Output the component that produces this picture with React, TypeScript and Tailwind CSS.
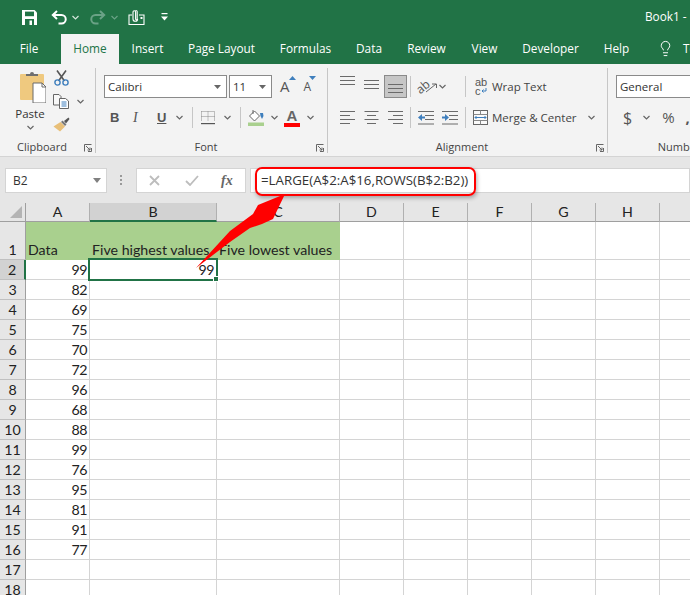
import * as React from "react";
import { Lightbulb } from "lucide-react";

/* ================= SMALL ICONS ================= */

function Chevron({ className = "" }: { className?: string }) {
  return (
    <svg width="7" height="5" viewBox="0 0 7 5" className={`shrink-0 ${className}`}>
      <path d="M0.5 1 L3.5 4 L6.5 1" fill="none" stroke="#666" strokeWidth="1.2" />
    </svg>
  );
}

function Launcher() {
  return (
    <svg width="8" height="8" viewBox="0 0 8 8" className="shrink-0">
      <path d="M0.5 7.5 V0.5 H7.5 M7.5 4 V7.5 H4 M2 2 L6 6 M6 3.5 V6 H3.5" fill="none" stroke="#666" strokeWidth="1" />
    </svg>
  );
}

function Lines({ widths, align = "left" }: { widths: number[]; align?: "left" | "center" | "right" }) {
  return (
    <svg width="15" height="13" viewBox="0 0 15 13" className="block shrink-0">
      {widths.map((w, i) => {
        const x = align === "left" ? 0 : align === "right" ? 15 - w : (15 - w) / 2;
        return <rect key={i} x={x} y={i * 4} width={w} height="1" fill="#6a6a6a" />;
      })}
    </svg>
  );
}

function Indent({ flip }: { flip?: boolean }) {
  return (
    <svg width="16" height="14" viewBox="0 0 16 14" className="block shrink-0">
      <path d="M0 0.5 H16 M7 4.5 H16 M7 8.5 H16 M0 13 H16" stroke="#6a6a6a" strokeWidth="1" />
      <path
        d={flip ? "M0 5.5 H3 V3 L7 6.5 L3 10 V7.5 H0 Z" : "M7 5.5 H4 V3 L0 6.5 L4 10 V7.5 H7 Z"}
        fill="#3f7fbd"
      />
    </svg>
  );
}

/* ================= TITLE + TABS ================= */

const tabs = [
  { label: "Insert", w: "w-[57px]" },
  { label: "Page Layout", w: "w-[91px]" },
  { label: "Formulas", w: "w-[77px]" },
  { label: "Data", w: "w-[50px]" },
  { label: "Review", w: "w-[65px]" },
  { label: "View", w: "w-[51px]" },
  { label: "Developer", w: "w-[81px]" },
  { label: "Help", w: "w-[51px]" },
];

function TitleBar() {
  return (
    <div className="flex h-[34px] items-center overflow-hidden pl-[22px] text-white whitespace-nowrap [&>svg]:shrink-0">
      <svg width="15" height="15" viewBox="0 0 15 15">
        <path d="M0 0 H12.5 L15 2.5 V15 H0 Z" fill="white" />
        <rect x="3" y="1.6" width="9" height="4.6" fill="#217346" />
        <rect x="3" y="9" width="9" height="6" fill="#217346" />
        <rect x="7.5" y="10.5" width="2.5" height="4.5" fill="white" />
      </svg>
      <svg width="17" height="15" viewBox="0 0 17 15" className="ml-[14px]">
        <path d="M6 1 L1.8 5 L6 9 M2 5 H10.5 A4 4 0 0 1 10.5 13.5 H7.5" fill="none" stroke="white" strokeWidth="2" />
      </svg>
      <Chevron className="ml-[4px] [&>path]:stroke-[#d5e6dc]" />
      <svg width="17" height="15" viewBox="0 0 17 15" className="ml-[10px]">
        <path d="M11 1 L15.2 5 L11 9 M15 5 H6.5 A4 4 0 0 0 6.5 13.5 H9.5" fill="none" stroke="#6aa286" strokeWidth="2" />
      </svg>
      <Chevron className="ml-[5px] [&>path]:stroke-[#6aa286]" />
      <svg width="17" height="17" viewBox="0 0 17 17" className="ml-[10px]">
        <path
          d="M4 6 H1 V15.5 H16 V6 H11 M5 10 V3 A1.3 1.3 0 0 1 7.6 3 V10 A0.8 0.8 0 0 0 9.2 10 V3 A1.3 1.3 0 0 0 7.6 1.5 M5 10 A2.2 2.2 0 0 0 9.6 10"
          fill="none"
          stroke="white"
          strokeWidth="1.1"
        />
        <rect x="12.5" y="8" width="2" height="2" fill="white" />
      </svg>
      <svg width="7" height="8" viewBox="0 0 7 8" className="ml-[16px]">
        <rect x="0.5" y="0" width="6" height="1.2" fill="white" />
        <path d="M0 3.5 H7 L3.5 7.5 Z" fill="white" />
      </svg>
      <span className="ml-[477px] text-[11.8px]">Book1 - Excel</span>
    </div>
  );
}

function TabBar() {
  return (
    <div className="flex h-[30px] items-stretch overflow-hidden pl-[7px] text-[11.8px] text-white whitespace-nowrap">
      <div className="flex w-[44px] shrink-0 items-center justify-center">File</div>
      <div className="ml-[10px] flex w-[58px] shrink-0 items-center justify-center bg-[#f3f3f3] text-[#217346]">Home</div>
      {tabs.map((t) => (
        <div key={t.label} className={`flex shrink-0 items-center justify-center ${t.w}`}>
          {t.label}
        </div>
      ))}
      <Lightbulb size={17} strokeWidth={1.4} className="ml-[15px] mt-[6px] shrink-0" />
      <span className="ml-[9px] flex shrink-0 items-center">Tell me</span>
    </div>
  );
}

/* ================= RIBBON ================= */

function Group({
  label,
  width,
  launcher = true,
  children,
}: {
  label: string;
  width: string;
  launcher?: boolean;
  children: React.ReactNode;
}) {
  return (
    <div className={`flex h-[85px] shrink-0 flex-col border-r border-[#c6c6c6] ${width}`}>
      <div className="h-[74px]">{children}</div>
      <div className="flex h-[11px] items-center pr-[3px] text-[11px] text-[#444]">
        <span className="flex-1 text-center">{label}</span>
        {launcher && <Launcher />}
      </div>
    </div>
  );
}

function ClipboardGroup() {
  return (
    <div className="flex h-full">
      <div className="ml-[14px] flex w-[32px] shrink-0 flex-col items-center">
        <svg width="29" height="32" viewBox="0 0 29 32" className="mt-[3px] ml-[2px] shrink-0">
          <rect x="3" y="3" width="24" height="26" rx="1" fill="#efc97f" />
          <path d="M10 5 V3 H14 A2 2 0 0 1 18 3 H22 V5 Z" fill="#6f6f6f" transform="translate(-1 0)" />
          <path d="M16 12 H25 L29 16 V32 H16 Z" fill="white" stroke="#6a6a6a" strokeWidth="1" />
          <path d="M25 12 V16 H29" fill="none" stroke="#6a6a6a" strokeWidth="1" />
        </svg>
        <span className="mt-[2px] text-[11.5px] leading-[17px] text-[#333]">Paste</span>
        <Chevron className="mt-[3px]" />
      </div>
      <div className="ml-[7px] flex flex-col">
        <svg width="15" height="16" viewBox="0 0 15 16" className="mt-[2px] ml-[1px] shrink-0">
          <path d="M3 0.5 L10.5 11 M12 0.5 L4.5 11" stroke="#555" strokeWidth="1.6" />
          <circle cx="3.5" cy="12.5" r="2.6" fill="none" stroke="#3f7fbd" strokeWidth="1.4" />
          <circle cx="11.5" cy="12.5" r="2.6" fill="none" stroke="#3f7fbd" strokeWidth="1.4" />
        </svg>
        <div className="mt-[8px] flex items-center">
          <svg width="16" height="15" viewBox="0 0 16 15" className="shrink-0">
            <path d="M0.5 0.5 H6 L8 2.5 V11 H0.5 Z" fill="#f8f8f8" stroke="#666" />
            <path d="M6.5 4.5 H12.5 L15.5 7 V14.5 H6.5 Z" fill="white" stroke="#666" />
            <path d="M8.5 8 H13.5 M8.5 10 H13.5 M8.5 12 H13.5" stroke="#3f7fbd" />
          </svg>
          <Chevron className="ml-[8px]" />
        </div>
        <svg width="17" height="15" viewBox="0 0 17 15" className="mt-[8px] shrink-0">
          <path d="M11 4 L15.5 0.5 L16.5 2 L13 6.5 Z" fill="#555" />
          <path d="M9.5 3.5 L13.5 7.5 L12 9 L8 5 Z" fill="#777" />
          <path d="M7.5 5 L12 9.5 L7 14.5 L0.5 9.5 Z" fill="#e8bf78" />
        </svg>
      </div>
    </div>
  );
}

function ComboBox({ text, width }: { text: string; width: string }) {
  return (
    <div className={`flex h-[23px] shrink-0 items-center border border-[#8a8a8a] bg-white pl-[3px] pr-[5px] ${width}`}>
      <span className="flex-1 text-[11.5px] text-[#333]">{text}</span>
      <svg width="7" height="4" viewBox="0 0 7 4">
        <path d="M0 0 H7 L3.5 4 Z" fill="#666" />
      </svg>
    </div>
  );
}

function Vr({ className = "" }: { className?: string }) {
  return <div className={`h-[21px] w-px shrink-0 bg-[#c6c6c6] ${className}`} />;
}

function FontGroup() {
  return (
    <div>
      <div className="ml-[8px] flex items-center pt-[7px]">
        <ComboBox text="Calibri" width="w-[123px]" />
        <ComboBox text="11" width="w-[43px] ml-[2px]" />
        <span className="relative ml-[8px] text-[15px] text-[#555]">
          A
          <svg width="7" height="4" viewBox="0 0 7 4" className="absolute -right-[6px] top-[1px]">
            <path d="M0 4 H7 L3.5 0 Z" fill="#3f7fbd" />
          </svg>
        </span>
        <span className="relative ml-[14px] text-[12px] text-[#555]">
          A
          <svg width="7" height="4" viewBox="0 0 7 4" className="absolute -right-[5px] -top-[2px]">
            <path d="M0 0 H7 L3.5 4 Z" fill="#3f7fbd" />
          </svg>
        </span>
      </div>
      <div className="mt-[9px] flex h-[21px] items-center text-[#555]">
        <span className="ml-[14px] w-[9px] font-['Liberation_Sans',sans-serif] text-[13px] font-bold">B</span>
        <span className="ml-[14px] w-[7px] font-['Liberation_Serif',serif] text-[14px] italic">I</span>
        <span className="ml-[17px] w-[9px] font-['Liberation_Sans',sans-serif] text-[13px] font-bold underline">U</span>
        <Chevron className="ml-[10px]" />
        <Vr className="ml-[9px]" />
        <svg width="14" height="14" viewBox="0 0 14 14" className="ml-[8px] shrink-0">
          <path d="M0.5 0.5 H13.5 V10 M0.5 0.5 V10 M7 0.5 V10 M0.5 5.5 H13.5" fill="none" stroke="#888" strokeDasharray="1 1" />
          <rect x="0" y="12" width="14" height="1.2" fill="#555" />
        </svg>
        <Chevron className="ml-[9px]" />
        <Vr className="ml-[9px]" />
        <svg width="16" height="16" viewBox="0 0 16 16" className="ml-[7px] shrink-0">
          <path d="M6.5 1 L11.5 6 L6.5 11 L1.5 6 Z" fill="white" stroke="#666" />
          <path d="M5 0 V4" stroke="#666" />
          <path d="M12 3 H15 L15.5 6 L14 9 L12.5 6 Z" fill="#3f7fbd" />
          <rect x="0" y="12.5" width="16" height="3.5" fill="#a9d08e" />
        </svg>
        <Chevron className="ml-[7px]" />
        <span className="ml-[6px] flex w-[16px] flex-col items-center">
          <span className="font-['Liberation_Sans',sans-serif] text-[15px] font-bold leading-[13px] text-[#666]">A</span>
          <span className="mt-[1px] h-[4px] w-[16px] bg-[#ff0000]" />
        </span>
        <Chevron className="ml-[7px]" />
      </div>
    </div>
  );
}

function AlignmentGroup() {
  return (
    <div>
      <div className="flex h-[30px] items-center pt-[7px]">
        <div className="ml-[12px] -mt-[8px]">
          <Lines widths={[15, 15, 15]} />
        </div>
        <div className="ml-[9px]">
          <Lines widths={[15, 15, 15]} />
        </div>
        <div className="ml-[5px] flex h-[23px] w-[23px] shrink-0 items-end justify-center border border-[#8a8a8a] bg-[#c6c6c6]">
          <Lines widths={[15, 15, 15]} />
        </div>
        <Vr className="ml-[3px]" />
        <span className="ml-[7px] flex h-[18px] w-[17px] shrink-0 items-center justify-center">
          <span className="text-[12px] text-[#555] [transform:rotate(-40deg)]">ab</span>
          <svg width="12" height="10" viewBox="0 0 12 10" className="-ml-[4px] mt-[3px] shrink-0">
            <path d="M0 9 L10 1 M6 1 H10.5 V5" fill="none" stroke="#666" />
          </svg>
        </span>
        <Chevron className="ml-[4px]" />
        <Vr className="ml-[19px]" />
        <span className="ml-[9px] flex w-[13px] shrink-0 flex-col font-['Liberation_Sans',sans-serif] text-[11px] leading-[9px] text-[#555]">
          <span>ab</span>
          <span className="flex items-center">
            c
            <svg width="6" height="6" viewBox="0 0 6 6">
              <path d="M5 0 V3 H1 M2.5 1.5 L1 3 L2.5 4.5" fill="none" stroke="#3f7fbd" />
            </svg>
          </span>
        </span>
        <span className="ml-[4px] whitespace-nowrap text-[11.5px] text-[#444]">Wrap Text</span>
      </div>
      <div className="mt-[9px] flex h-[21px] items-center">
        <div className="ml-[12px]">
          <Lines widths={[15, 10, 15, 10]} />
        </div>
        <div className="ml-[9px]">
          <Lines widths={[14, 9, 14, 9]} align="center" />
        </div>
        <div className="ml-[9px]">
          <Lines widths={[15, 10, 15, 10]} align="right" />
        </div>
        <Vr className="ml-[7px]" />
        <div className="ml-[7px]">
          <Indent />
        </div>
        <div className="ml-[8px]">
          <Indent flip />
        </div>
        <Vr className="ml-[7px]" />
        <svg width="15" height="15" viewBox="0 0 15 15" className="ml-[7px] shrink-0">
          <rect x="0.5" y="0.5" width="14" height="14" fill="#fafafa" stroke="#666" />
          <path d="M0.5 4.5 H14.5 M0.5 10.5 H14.5 M7.5 0.5 V4.5 M7.5 10.5 V14.5" stroke="#888" />
          <path d="M2 7.5 H13 M3.5 6 L2 7.5 L3.5 9 M11.5 6 L13 7.5 L11.5 9" fill="none" stroke="#3f7fbd" />
        </svg>
        <span className="ml-[4px] w-[96px] shrink-0 whitespace-nowrap text-[11.5px] text-[#444]">Merge & Center</span>
        <Chevron />
      </div>
    </div>
  );
}

function NumberGroup() {
  return (
    <div className="w-[200px]">
      <div className="ml-[8px] pt-[7px]">
        <ComboBox text="General" width="w-[150px]" />
      </div>
      <div className="mt-[9px] flex h-[21px] items-center text-[#555]">
        <span className="ml-[15px] text-[16px]">$</span>
        <Chevron className="ml-[11px]" />
        <span className="ml-[12px] text-[15px]">%</span>
        <span className="ml-[11px] text-[15px] font-bold">,</span>
      </div>
    </div>
  );
}

function Ribbon() {
  return (
    <div className="flex h-[93px] overflow-hidden border-b border-[#d4d4d4] bg-[#f3f3f3] pt-[4px] font-['Open_Sans',sans-serif]">
      <Group label="Clipboard" width="w-[96px]">
        <ClipboardGroup />
      </Group>
      <Group label="Font" width="w-[232px]">
        <FontGroup />
      </Group>
      <Group label="Alignment" width="w-[280px]">
        <AlignmentGroup />
      </Group>
      <Group label="Number" width="w-[146px]" launcher={false}>
        <NumberGroup />
      </Group>
    </div>
  );
}

/* ================= FORMULA BAR ================= */

function FormulaBar() {
  return (
    <div className="flex h-[46px] items-start bg-[#e6e6e6] pl-[5px] pt-[11px]">
      <div className="flex h-[25px] w-[102px] shrink-0 items-center justify-between border border-[#d4d4d4] bg-white pl-[7px] pr-[5px] font-['Open_Sans',sans-serif] text-[12px] text-[#333]">
        B2
        <svg width="8" height="5" viewBox="0 0 8 5">
          <path d="M0 0 H8 L4 5 Z" fill="#808080" />
        </svg>
      </div>
      <div className="ml-[13px] mt-[7px] flex w-[2px] shrink-0 flex-col gap-[2px]">
        <span className="h-[2px] bg-[#999]" />
        <span className="h-[2px] bg-[#999]" />
        <span className="h-[2px] bg-[#999]" />
      </div>
      <div className="ml-[14px] flex h-[25px] w-[110px] shrink-0 items-center border border-[#d4d4d4] bg-white">
        <svg width="11" height="11" viewBox="0 0 11 11" className="ml-[12px] shrink-0">
          <path d="M1 1 L10 10 M10 1 L1 10" stroke="#bdbdbd" strokeWidth="1.8" />
        </svg>
        <svg width="14" height="11" viewBox="0 0 14 11" className="ml-[25px] shrink-0">
          <path d="M1 6 L5 10 L13 1" fill="none" stroke="#bdbdbd" strokeWidth="1.8" />
        </svg>
        <span className="ml-[22px] font-['Liberation_Serif',serif] text-[14px] font-bold italic leading-none text-[#666]">
          fx
        </span>
      </div>
      <div className="ml-[4px] flex h-[25px] flex-1 items-center whitespace-nowrap border border-[#d4d4d4] bg-white pl-[10px] font-['Open_Sans',sans-serif] text-[13.3px] text-[#333]">
        =LARGE(A$2:A$16,ROWS(B$2:B2))
      </div>
    </div>
  );
}

/* ================= SHEET ================= */

const columns = [
  { name: "A", w: "w-[64px]" },
  { name: "B", w: "w-[127px]" },
  { name: "C", w: "w-[123px]" },
  { name: "D", w: "w-[64px]" },
  { name: "E", w: "w-[64px]" },
  { name: "F", w: "w-[64px]" },
  { name: "G", w: "w-[64px]" },
  { name: "H", w: "w-[64px]" },
  { name: "I", w: "w-[64px]" },
];

const data = [99, 82, 69, 75, 70, 72, 96, 68, 88, 99, 76, 95, 81, 91, 77];

const headerText: Record<string, string> = {
  A: "Data",
  B: "Five highest values",
  C: "Five lowest values",
};

function HeaderRow() {
  return (
    <div className="flex h-[19px]">
      <div className="flex w-[26px] shrink-0 items-end justify-end border-b border-r border-[#9f9f9f] bg-[#e6e6e6] pb-[3px] pr-[3px]">
        <svg width="12" height="12" viewBox="0 0 12 12">
          <path d="M12 0 V12 H0 Z" fill="#b4b4b4" />
        </svg>
      </div>
      {columns.map((c) => (
        <div
          key={c.name}
          className={`flex shrink-0 items-center justify-center ${c.w} ${
            c.name === "B"
              ? "border-b-2 border-r border-b-[#217346] border-r-[#b0b0b0] bg-[#d2d2d2]"
              : "border-b border-r border-b-[#9f9f9f] border-r-[#b0b0b0] bg-[#e6e6e6]"
          }`}
        >
          {c.name}
        </div>
      ))}
    </div>
  );
}

function SheetRow({ index }: { index: number }) {
  const isHead = index === 1;
  const isActive = index === 2;
  const value = index >= 2 ? data[index - 2] : undefined;
  return (
    <div className={`flex ${isHead ? "h-[38px]" : "h-[20px]"}`}>
      <div
        className={`flex w-[26px] shrink-0 items-end justify-center border-b border-[#c0c0c0] ${
          isActive ? "border-r-2 border-r-[#217346] bg-[#d2d2d2]" : "border-r border-r-[#9f9f9f] bg-[#e6e6e6]"
        }`}
      >
        {index}
      </div>
      {columns.map((c) => {
        let text: React.ReactNode = null;
        if (isHead) text = headerText[c.name] ?? null;
        if (c.name === "A" && value !== undefined) text = value;
        if (c.name === "B" && isActive) text = 99;
        const right = !isHead && text !== null;
        const selected = c.name === "B" && isActive;
        const green = isHead && (c.name === "A" || c.name === "B" || c.name === "C");
        return (
          <div
            key={c.name}
            className={`relative flex shrink-0 items-end whitespace-nowrap border-b px-[2px] ${c.w} ${
              right ? "justify-end tracking-[-0.5px]" : ""
            } ${green ? "border-[#a9d08e] bg-[#a9d08e]" : "border-r border-[#d4d4d4]"}`}
          >
            {text}
            {selected && (
              <>
                <div className="absolute -inset-[2px] z-10 border-2 border-[#217346]" />
                <div className="absolute -bottom-[3px] -right-[3px] z-10 h-[6px] w-[6px] border border-white bg-[#217346]" />
              </>
            )}
          </div>
        );
      })}
    </div>
  );
}

function Sheet() {
  const rows = Array.from({ length: 18 }, (_, i) => i + 1);
  return (
    <div className="bg-white font-['Lato',sans-serif] text-[14.2px] leading-[18px] text-[#222]">
      <HeaderRow />
      {rows.map((r) => (
        <SheetRow key={r} index={r} />
      ))}
    </div>
  );
}

/* ================= APP ================= */

export default function App() {
  return (
    <div className="relative h-[595px] w-[690px] overflow-hidden bg-white">
      <div className="bg-[#217346] font-['Open_Sans',sans-serif]">
        <TitleBar />
        <TabBar />
      </div>
      <Ribbon />
      <FormulaBar />
      <Sheet />

      {/* Red callout drawn over the screenshot */}
      <div className="absolute left-[255px] top-[167px] z-20 h-[29px] w-[221px] rounded-[7px] border-2 border-[#ff0000] shadow-[1px_2px_4px_rgba(0,0,0,0.3)]" />
      <svg width="690" height="595" viewBox="0 0 690 595" className="pointer-events-none absolute left-0 top-0 z-20">
        <path d="M285 194 L258 205 L253 214 L230 231 L196 268 L230 242 L250 228 L262 224 L273 219 Z" fill="#ff0000" />
      </svg>
    </div>
  );
}
